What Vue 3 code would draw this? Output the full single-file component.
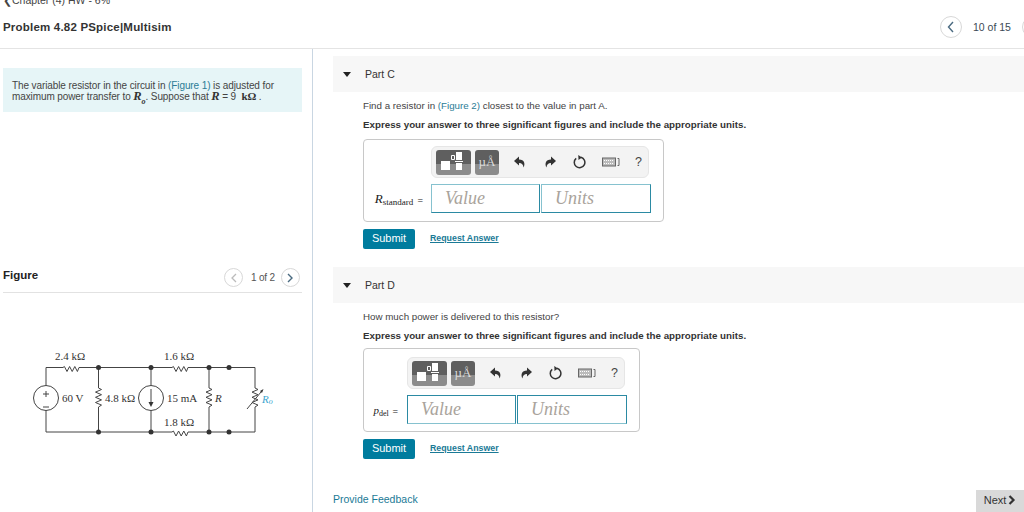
<script setup>
const parts = [
  { id: 'C', title: 'Part C', ask: 'Find a resistor in', fig: '(Figure 2)', rest: ' closest to the value in part A.', sym: 'R', sub: 'standard', mod: 'editor-c' },
  { id: 'D', title: 'Part D', ask: 'How much power is delivered to this resistor?', fig: '', rest: '', sym: 'p', sub: 'del', mod: 'editor-d' }
]
function zigH(x, y) {
  const p = [[x, y]]
  for (let i = 0; i < 6; i++) p.push([x + 1.4 + i * 2.6, y + (i % 2 ? 3 : -2) + 1])
  p.push([x + 16, y])
  return p.map(a => a.join(',')).join(' ')
}
function zigV(x, y) {
  const p = [[x, y]]
  for (let i = 0; i < 7; i++) p.push([x + (i % 2 ? -3 : 3), y + 1.5 + i * 2.6])
  p.push([x, y + 19])
  return p.map(a => a.join(',')).join(' ')
}
const nodes = [[98.5, 367.5], [151, 367.5], [209, 367.5], [229, 367.5], [98.5, 432], [151, 432], [209, 432], [229, 432]]
</script>

<template>
  <div class="page">
    <header class="top">
      <div class="crumb">❮Chapter (4) HW - 6%</div>
      <div class="titlebar">
        <h1>Problem 4.82 PSpice|Multisim</h1>
        <div class="pager">
          <button class="round big"><svg width="10" height="12" viewBox="0 0 10 12"><path d="M7 1 2.500 6 7 11" fill="none" stroke="#4a6a80" stroke-width="1.400"/></svg></button>
          <span>10 of 15</span>
          <button class="round big"></button>
        </div>
      </div>
    </header>

    <main class="cols">
      <section class="left">
        <div class="intro">
          The variable resistor in the circuit in <a>(Figure 1)</a> is adjusted for<br>
          maximum power transfer to <b class="m">R<sub>o</sub></b>. Suppose that <b class="m">R</b> = 9 &nbsp;<b class="u">kΩ</b> .
        </div>
        <div class="fighead">
          <h2>Figure</h2>
          <div class="figpager">
            <button class="round"><svg width="8" height="10" viewBox="0 0 8 10"><path d="M6 1 2 5l4 4" fill="none" stroke="#bbb" stroke-width="1.300"/></svg></button>
            <span>1 of 2</span>
            <button class="round"><svg width="8" height="10" viewBox="0 0 8 10"><path d="M2 1l4 4-4 4" fill="none" stroke="#4a6a80" stroke-width="1.400"/></svg></button>
          </div>
        </div>
        <svg class="circuit" width="310" height="110" viewBox="0 340 310 110">
          <g fill="none" stroke="#444" stroke-width="1">
            <path d="M46 385.500V367.500H63M79 367.500H172M188 367.500H255V388M255 407V432H188M172 432H46V410.500"/>
            <polyline :points="zigH(63, 367.5)"/>
            <polyline :points="zigH(172, 367.5)"/>
            <polyline :points="zigH(172, 432)"/>
            <path d="M98.500 367.500V388M98.500 407V432M151 367.500V385.500M151 410.500V432M209 367.500V388M209 407V432"/>
            <polyline :points="zigV(98.5, 388)"/>
            <polyline :points="zigV(209, 388)"/>
            <polyline :points="zigV(255, 388)"/>
            <circle cx="46" cy="398" r="12.500"/>
            <circle cx="151" cy="398" r="12.500"/>
            <path d="M151 389V403M43 394H49M46 391V397M43 407H49"/>
            <path d="M247 409 261 392"/>
          </g>
          <path d="M148.500 402H153.500L151 407zM263.500 389 260 391 262 393z" fill="#333"/>
          <g fill="#333" class="ctext">
            <circle v-for="n in nodes" :key="n.join()" :cx="n[0]" :cy="n[1]" r="2.500" stroke="none"/>
            <text x="55" y="360">2.4 kΩ</text>
            <text x="164" y="360">1.6 kΩ</text>
            <text x="164" y="425.500">1.8 kΩ</text>
            <text x="62" y="402">60 V</text>
            <text x="105" y="402">4.8 kΩ</text>
            <text x="167" y="402">15 mA</text>
            <text x="215" y="402" font-style="italic">R</text>
            <text x="262" y="403" font-style="italic" fill="#3ba5d0">R<tspan font-size="8" dy="1">o</tspan></text>
          </g>
        </svg>
      </section>

      <section class="right">
        <article v-for="p in parts" :key="p.id" class="part">
          <div class="parthead"><i class="tri"></i>{{ p.title }}</div>
          <p class="ask">{{ p.ask }} <a v-if="p.fig">{{ p.fig }}</a>{{ p.rest }}</p>
          <p class="express">Express your answer to three significant figures and include the appropriate units.</p>
          <div class="editor" :class="p.mod">
            <div class="toolbar">
              <span class="tbtn tmpl">
                <svg width="35" height="25" viewBox="0 0 35 25">
                  <path d="M5 11h9v9H5zM20 2h6v8h-6zM20 13h6v7h-6z" fill="#fff"/>
                  <path d="M15.500 5.500h3v4h-3z" fill="none" stroke="#fff"/>
                  <path d="M19 11.500h8" stroke="#fff"/>
                </svg>
              </span>
              <span class="tbtn units"><span>µÅ</span></span>
              <svg class="tool undo" width="14" height="14" viewBox="0 0 14 14"><path d="M6 1.500 1 6l5 4.500V8c3 0 4.200 1.500 4.500 4.500C12.500 9 11.500 4.500 6 4.500z" fill="#333"/></svg>
              <svg class="tool redo" width="14" height="14" viewBox="0 0 14 14"><path d="M8 1.500 13 6l-5 4.500V8c-3 0-4.200 1.500-4.500 4.500C1.500 9 2.500 4.500 8 4.500z" fill="#333"/></svg>
              <svg class="tool reset" width="14" height="14" viewBox="0 0 14 14"><path d="M4.200 3.300A5.300 5.300 0 1 0 9 2.300" fill="none" stroke="#333" stroke-width="1.500"/><path d="M6.300 0 10 2.600 6.500 5z" fill="#333"/></svg>
              <svg class="tool kbd" width="18" height="10" viewBox="0 0 18 10"><rect x=".5" y="1" width="13" height="8" fill="#bbb" stroke="#666"/><path d="M2 3.500h10M2 6.500h10" stroke="#fff" stroke-dasharray="1 1"/><path d="M15.500 1.500h1.500v7h-1.500" fill="none" stroke="#666"/></svg>
              <span class="help">?</span>
            </div>
            <label class="sym"><i>{{ p.sym }}</i><sub>{{ p.sub }}</sub> <span>=</span></label>
            <div class="fields">
              <span class="field">Value</span>
              <span class="field">Units</span>
            </div>
          </div>
          <div class="actions">
            <button class="submit">Submit</button>
            <a class="req">Request Answer</a>
          </div>
        </article>
        <div class="foot">
          <a class="feedback">Provide Feedback</a>
          <button class="next">Next<svg width="8" height="10" viewBox="0 0 8 10"><path d="M1.500 1 5.500 5l-4 4" fill="none" stroke="#333" stroke-width="2.200"/></svg></button>
        </div>
      </section>
    </main>
  </div>
</template>

<style>
html, body { margin: 0; background: #fff; }
</style>

<style scoped>
.page {
  width: 1024px; height: 512px; overflow: hidden; display: flex; flex-direction: column;
  font-family: "Liberation Sans", Arial, sans-serif; color: #333; background: #fff;
}
.top { height: 49px; flex: none; border-bottom: 1px solid #e4e4e4; box-sizing: border-box; }
.crumb { height: 7px; margin-top: -5px; padding-left: 3px; font-size: 10.500px; line-height: 11px; color: #444; }
.titlebar { display: flex; justify-content: space-between; align-items: center; height: 30px; margin-top: 10px; padding-left: 3px; }
h1 { margin: 0; font-size: 11.500px; font-weight: 700; letter-spacing: .2px; color: #333; }
.pager { display: flex; align-items: center; gap: 11px; width: 84px; font-size: 10.500px; color: #3b4a55; flex: none; white-space: nowrap; }
button { font-family: inherit; padding: 0; }
.round { width: 19px; height: 19px; border: 1.500px solid #d8d8d8; border-radius: 50%; background: #fff; display: flex; align-items: center; justify-content: center; flex: none; box-sizing: border-box; }
.round.big { width: 22px; height: 22px; }
.cols { flex: 1; display: flex; min-height: 0; }
.left { width: 313px; box-sizing: border-box; border-right: 1px solid #c9d6e2; flex: none; padding: 19px 10px 0 3px; }
.intro { height: 44px; box-sizing: border-box; padding: 12px 9px 0; background: #e6f5f7; font-size: 10px; line-height: 11px; letter-spacing: -.1px; color: #444; }
a { color: #2b7c96; }
.m { font-family: "Liberation Serif", serif; font-style: italic; font-size: 12.500px; color: #333; }
.m sub { font-size: 8px; line-height: 0; }
.u { font-family: "Liberation Serif", serif; font-size: 11px; color: #333; }
.fighead { display: flex; justify-content: space-between; align-items: center; height: 30px; margin-top: 151px; border-bottom: 1px solid #e2e2e2; box-sizing: border-box; }
h2 { margin: 0; font-size: 11.500px; font-weight: 700; color: #222; position: relative; top: -3px; }
.figpager { display: flex; align-items: center; gap: 6px; font-size: 10px; letter-spacing: -.2px; color: #555; width: 77px; margin-right: 1px; }
.figpager span { margin-left: 2px; }
.circuit { display: block; margin: 47px 0 0 -3px; }
.ctext text { font-family: "Liberation Serif", serif; font-size: 11px; stroke: none; }
.right { flex: 1; min-width: 0; padding: 7px 0 0 20px; position: relative; }
.part { height: 211px; font-size: 9.500px; }
.parthead { display: flex; align-items: center; height: 36px; padding-left: 10px; background: #f7f7f7; font-size: 10.500px; color: #333; }
.tri { width: 0; height: 0; border-left: 4px solid transparent; border-right: 4px solid transparent; border-top: 5px solid #222; margin-right: 14px; }
.ask { margin: 7px 0 0 30px; height: 13px; line-height: 13px; font-size: 9.750px; color: #444; }
.express { margin: 6px 0 0 30px; line-height: 13px; font-size: 9.780px; font-weight: 700; color: #333; }
.editor { margin: 8px 0 0 30px; display: grid; border: 1px solid #c8c8c8; border-radius: 4px; box-sizing: border-box; align-items: center; }
.editor-c { width: 301px; height: 83px; grid-template-columns: 67px 1fr; grid-template-rows: 32px 29px; padding-top: 6px; row-gap: 6px; }
.editor-d { width: 277px; height: 84px; grid-template-columns: 43px 1fr; grid-template-rows: 32px 29px; padding-top: 8px; row-gap: 6px; margin-top: 6px; }
.toolbar { grid-column: 2; grid-row: 1; width: 218px; height: 32px; box-sizing: border-box; display: flex; align-items: center; padding-left: 4px; background: #f3f3f3; border: 1px solid #e6e6e6; border-radius: 6px; }
.tbtn { height: 25px; border-radius: 3px; background: linear-gradient(#5f5f5f 0 56%, #8c8c8c 56% 100%); display: flex; align-items: center; justify-content: center; flex: none; }
.tmpl { width: 35px; margin-right: 4px; }
.units { width: 24px; color: #dcdcdc; font-family: "Liberation Serif", serif; font-size: 13px; }
.tool { flex: none; }
.undo { margin-left: 14px; }
.redo { margin-left: 16px; }
.reset { margin-left: 15px; }
.kbd { margin-left: 16px; }
.help { margin-left: 15px; font-size: 12.500px; color: #444; }
.sym { grid-column: 1; grid-row: 2; justify-self: end; padding-right: 8px; font-family: "Liberation Serif", serif; font-size: 13px; color: #222; white-space: nowrap; }
.sym sub { font-size: 9px; line-height: 0; vertical-align: -2px; }
.sym span { font-size: 9.500px; font-family: "Liberation Sans", sans-serif; margin-left: 1px; }
.editor-d .sym { padding-right: 9px; font-size: 11px; }
.editor-d .sym sub { font-size: 8px; }
.fields { grid-column: 2; grid-row: 2; display: flex; gap: 1px; }
.field { width: 109px; height: 29px; box-sizing: border-box; padding-left: 13px; line-height: 26px; border: 1px solid; border-color: #86c2cf #2b8aa3 #2b8aa3 #86c2cf; font-family: "Liberation Serif", serif; font-style: italic; font-size: 18px; color: #a9a39b; }
.field + .field { width: 110px; }
.editor-d .field { border-color: #2b8aa3 #2b8aa3 #86c2cf #2b8aa3; }
.actions { display: flex; align-items: center; margin: 7px 0 0 30px; gap: 15px; }
.submit { width: 52px; height: 20px; border: 0; border-radius: 2px; background: #007c9e; color: #fff; font-size: 11px; padding-bottom: 2px; }
.req { font-size: 8.800px; font-weight: 700; color: #1a7a96; text-decoration: underline; position: relative; top: -1px; }
.foot { position: absolute; left: 20px; right: 0; top: 441px; height: 22px; display: flex; justify-content: space-between; align-items: center; }
.feedback { font-size: 10.500px; color: #1a7a96; margin-bottom: 4px; }
.next { width: 48px; height: 22px; border: 0; background: #d9d9d9; color: #333; font-size: 11px; display: flex; align-items: center; justify-content: center; gap: 2px; padding-bottom: 3px; }
</style>
